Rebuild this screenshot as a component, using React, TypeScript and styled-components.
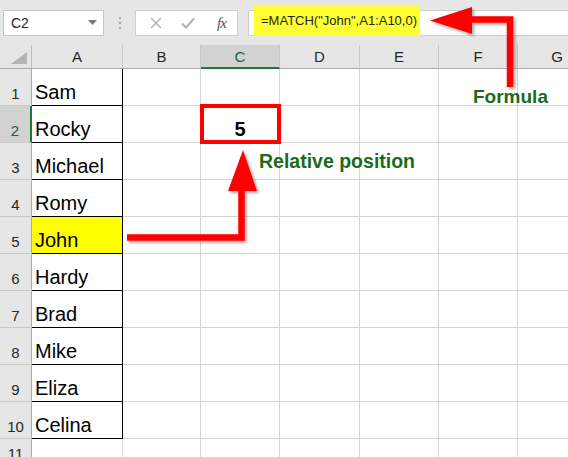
import React from 'react';
import styled, { createGlobalStyle, css } from 'styled-components';

const GlobalStyle = createGlobalStyle`
  html, body {
    margin: 0;
    padding: 0;
    background: #ffffff;
  }
  body {
    font-family: "Liberation Sans", Arial, sans-serif;
  }
`;

const green = '#217346';
const headerBg = '#e6e6e6';
const gridLine = '#d4d4d4';

const names = ['Sam', 'Rocky', 'Michael', 'Romy', 'John', 'Hardy', 'Brad', 'Mike', 'Eliza', 'Celina'];
const cols = ['A', 'B', 'C', 'D', 'E', 'F', 'G'];

// toolbar

const Frame = styled.div`
  position: relative;
  width: 568px;
  height: 457px;
  overflow: hidden;
  background: ${headerBg};
`;

const Toolbar = styled.div`
  display: flex;
  align-items: flex-start;
  height: 45px;
  padding: 10px 0 0 3px;
  box-sizing: border-box;
`;

const NameBox = styled.div`
  display: flex;
  align-items: center;
  justify-content: space-between;
  width: 101px;
  height: 26px;
  box-sizing: border-box;
  padding: 0 6px 0 7px;
  background: #ffffff;
  border: 1px solid #c6c6c6;
  font-size: 14px;
  color: #262626;
`;

const Grip = styled.div`
  display: flex;
  justify-content: center;
  align-items: center;
  width: 31px;
  height: 26px;
`;

const ButtonBox = styled.div`
  display: flex;
  align-items: center;
  width: 103px;
  height: 26px;
  box-sizing: border-box;
  padding: 0 4px 0 10px;
  margin-right: 10px;
  background: #ffffff;
  border: 1px solid #d0d0d0;
`;

const IconSlot = styled.span<{ $w: number }>`
  display: flex;
  align-items: center;
  justify-content: center;
  width: ${(p) => p.$w}px;
  height: 24px;
`;

const Fx = styled.span`
  font-family: "Liberation Serif", "Times New Roman", serif;
  font-style: italic;
  font-size: 15px;
  color: #505050;
  letter-spacing: -1px;
`;

const FormulaBox = styled.div`
  flex: 1;
  display: flex;
  align-items: flex-start;
  height: 26px;
  margin-right: -4px;
  box-sizing: border-box;
  padding-left: 5px;
  background: #ffffff;
  border: 1px solid #d0d0d0;
`;

const Highlight = styled.span`
  display: flex;
  align-items: center;
  height: 31px;
  margin-top: -6px;
  padding: 0 3px 0 7px;
  background: #ffff33;
  font-size: 13px;
  color: #1f1f1f;
  white-space: nowrap;
`;

// sheet

const Sheet = styled.div`
  display: grid;
  grid-template-columns: 32px 91px 78px 79px 80px 79px 79px 79px;
  grid-template-rows: 24px repeat(10, 37px) 23px;
  width: max-content;
  background: #ffffff;
`;

const HeadCell = styled.div`
  box-sizing: border-box;
  background: ${headerBg};
  border-bottom: 1px solid #ababab;
`;

const Corner = styled(HeadCell)`
  position: relative;
  border-right: 1px solid #bcbcbc;
`;

const ColHead = styled(HeadCell)<{ $selected?: boolean }>`
  display: flex;
  align-items: center;
  justify-content: center;
  border-right: 1px solid #c8c8c8;
  font-size: 15px;
  color: #262626;
  ${(p) =>
    p.$selected &&
    css`
      background: #d2d2d2;
      border-bottom: 2px solid ${green};
      color: #1d5c3a;
    `}
`;

const RowHead = styled.div<{ $selected?: boolean; $short?: boolean }>`
  display: flex;
  align-items: flex-end;
  justify-content: center;
  box-sizing: border-box;
  padding-bottom: ${(p) => (p.$short ? 0 : 4)}px;
  background: ${headerBg};
  border-right: 1px solid #ababab;
  border-bottom: 1px solid #c8c8c8;
  font-size: 15px;
  line-height: 15px;
  color: #262626;
  ${(p) =>
    p.$selected &&
    css`
      background: #d2d2d2;
      border-right: 2px solid ${green};
      color: #1d5c3a;
    `}
`;

const Cell = styled.div<{ $boxed?: boolean; $fill?: string; $result?: boolean }>`
  position: relative;
  display: flex;
  align-items: flex-end;
  box-sizing: border-box;
  padding: 0 0 3px 3px;
  border-right: 1px solid ${(p) => (p.$boxed ? '#000000' : gridLine)};
  border-bottom: 1px solid ${(p) => (p.$boxed ? '#000000' : gridLine)};
  background: ${(p) => p.$fill || '#ffffff'};
  font-size: 20px;
  line-height: 20px;
  color: #000000;
  ${(p) =>
    p.$result &&
    css`
      z-index: 1;
      justify-content: center;
      padding-left: 0;
      font-weight: bold;
      &::after {
        content: '';
        position: absolute;
        top: -2px;
        left: -1px;
        right: -2px;
        bottom: -2px;
        border: 4px solid #ff0000;
      }
    `}
`;

// annotations over the sheet

const Overlay = styled.svg`
  position: absolute;
  left: 0;
  top: 0;
  width: 568px;
  height: 457px;
  pointer-events: none;
  z-index: 5;
`;

const Note = styled.div<{ $x: number; $y: number; $size: number }>`
  position: absolute;
  left: ${(p) => p.$x}px;
  top: ${(p) => p.$y}px;
  z-index: 6;
  font-family: "Liberation Sans", Arial, sans-serif;
  font-weight: bold;
  font-size: ${(p) => p.$size}px;
  line-height: ${(p) => p.$size}px;
  color: #1b6b1b;
  white-space: nowrap;
`;

const CornerMark = styled.svg`
  position: absolute;
  right: 4px;
  bottom: 4px;
`;

const DropArrow = () => (
  <svg width="9" height="6" viewBox="0 0 9 6">
    <path d="M0 0 H9 L4.5 5 Z" fill="#7a7a7a" />
  </svg>
);

const Dots = () => (
  <svg width="4" height="14" viewBox="0 0 4 14">
    <rect x="1" y="1" width="2" height="2" fill="#a6a6a6" />
    <rect x="1" y="6" width="2" height="2" fill="#a6a6a6" />
    <rect x="1" y="11" width="2" height="2" fill="#a6a6a6" />
  </svg>
);

const Cross = () => (
  <svg width="12" height="12" viewBox="0 0 12 12">
    <path d="M1 1 L11 11 M11 1 L1 11" stroke="#b0b0b0" strokeWidth="1.4" />
  </svg>
);

const Check = () => (
  <svg width="14" height="12" viewBox="0 0 14 12">
    <path d="M1 6.5 L5 10.5 L13 1.5" stroke="#b0b0b0" strokeWidth="2" fill="none" />
  </svg>
);

const Arrows = () => (
  <Overlay viewBox="0 0 568 457">
    <defs>
      <filter id="shade" x="-20%" y="-20%" width="140%" height="140%">
        <feDropShadow dx="2" dy="2" stdDeviation="1.5" floodColor="#000000" floodOpacity="0.35" />
      </filter>
    </defs>
    <g filter="url(#shade)" fill="#ff0000">
      <path d="M510 87 V19.5 H468" stroke="#ff0000" strokeWidth="6.5" fill="none" />
      <path d="M430 20.5 L472 7 L472 34 Z" />
      <path d="M127 237.5 H241.5 V188" stroke="#ff0000" strokeWidth="6.5" fill="none" />
      <path d="M243 150 L228 191 L257 191 Z" />
    </g>
  </Overlay>
);

const App = () => {
  const rows = Array.from({ length: 11 }, (_, i) => i + 1);
  return (
    <Frame>
      <GlobalStyle />
      <Toolbar>
        <NameBox>
          C2
          <DropArrow />
        </NameBox>
        <Grip>
          <Dots />
        </Grip>
        <ButtonBox>
          <IconSlot $w={20}>
            <Cross />
          </IconSlot>
          <IconSlot $w={46}>
            <Check />
          </IconSlot>
          <IconSlot $w={24}>
            <Fx>fx</Fx>
          </IconSlot>
        </ButtonBox>
        <FormulaBox>
          <Highlight>=MATCH("John",A1:A10,0)</Highlight>
        </FormulaBox>
      </Toolbar>

      <Sheet>
        <Corner>
          <CornerMark width="16" height="12" viewBox="0 0 16 12">
            <path d="M16 0 V12 H0 Z" fill="#b4b4b4" />
          </CornerMark>
        </Corner>
        {cols.map((c) => (
          <ColHead key={c} $selected={c === 'C'}>
            {c}
          </ColHead>
        ))}
        {rows.map((r) => (
          <React.Fragment key={r}>
            <RowHead $selected={r === 2} $short={r === 11}>
              {r}
            </RowHead>
            {cols.map((c) => {
              const inA = c === 'A' && r <= 10;
              return (
                <Cell
                  key={c}
                  $boxed={inA}
                  $fill={inA && r === 5 ? '#ffff00' : undefined}
                  $result={c === 'C' && r === 2}
                >
                  {inA ? names[r - 1] : c === 'C' && r === 2 ? '5' : null}
                </Cell>
              );
            })}
          </React.Fragment>
        ))}
      </Sheet>

      <Arrows />
      <Note $x={473} $y={87} $size={19}>
        Formula
      </Note>
      <Note $x={259} $y={152} $size={19.5}>
        Relative position
      </Note>
    </Frame>
  );
};

export default App;
